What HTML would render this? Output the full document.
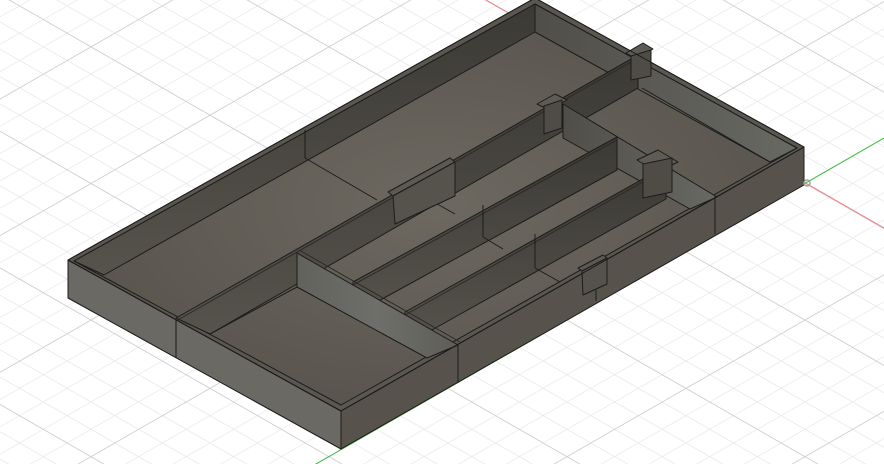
<!DOCTYPE html>
<html><head><meta charset="utf-8"><style>
html,body{margin:0;padding:0;background:#fff;width:884px;height:464px;overflow:hidden}
svg{display:block}
</style></head><body>
<svg width="884" height="464" viewBox="0 0 884 464" xmlns="http://www.w3.org/2000/svg">
<defs>
<pattern id="minor" patternUnits="userSpaceOnUse" width="1" height="1" patternTransform="matrix(23.8 13.66 -23.8 13.66 805 183)">
<path d="M0 0H1M0 0V1" stroke="#e4e4e4" stroke-width="0.05" fill="none"/>
</pattern>
<pattern id="major" patternUnits="userSpaceOnUse" width="5" height="5" patternTransform="matrix(23.8 13.66 -23.8 13.66 805 183)">
<path d="M0 0H5M0 0V5" stroke="#cfcfcf" stroke-width="0.07" fill="none"/>
</pattern>
<radialGradient id="floor" cx="0.5" cy="0.5" r="0.6">
<stop offset="0" stop-color="#6d6961"/><stop offset="1" stop-color="#56524b"/>
</radialGradient>
<linearGradient id="dark" x1="0" y1="0" x2="0" y2="1">
<stop offset="0" stop-color="#3c3a35"/><stop offset="1" stop-color="#56534c"/>
</linearGradient>
<linearGradient id="light" x1="0" y1="0" x2="1" y2="0">
<stop offset="0" stop-color="#62625d"/><stop offset="0.5" stop-color="#6e6f6a"/><stop offset="1" stop-color="#5e5d58"/>
</linearGradient>
<linearGradient id="rw" x1="0" y1="0" x2="1" y2="0">
<stop offset="0" stop-color="#504e48"/><stop offset="1" stop-color="#686963"/>
</linearGradient>
</defs>
<rect width="884" height="464" fill="#fff"/>
<rect width="884" height="464" fill="url(#minor)"/>
<rect width="884" height="464" fill="url(#major)"/>
<line x1="486" y1="0" x2="884" y2="228" stroke="#f08080" stroke-width="1"/>
<line x1="884" y1="138" x2="302" y2="472" stroke="#3cc03c" stroke-width="1"/>

<g stroke="#1c1c1a" stroke-width="1" stroke-linejoin="round">
<polygon points="68,260 341,411 341,449 68,298" fill="#6a6964"/>
<polygon points="341,411 804,147 804,185 341,449" fill="#57534c"/>
<polygon points="68,260 535,-2 804,147 341,411" fill="#5a5750"/>
<polygon points="74,261 535,4 797,148 341,405" fill="url(#floor)"/>
<polygon points="74,261 535,4 535,32 104,275" fill="url(#dark)"/>
<polygon points="535,4 797,148 770,162 535,32" fill="url(#rw)"/>
<line x1="305" y1="130" x2="305" y2="158"/>
<line x1="305" y1="158" x2="377" y2="200"/>
<polygon points="176,318 638,55 638,88 210,334" fill="url(#dark)"/>
<line x1="176" y1="321" x2="638" y2="58" stroke="#2a2a27"/>
<line x1="642" y1="88" x2="770" y2="162"/>
<polygon points="563,104 717,197 690,209 563,138" fill="url(#rw)"/>
<polygon points="353,282 617,137 617,170 353,315" fill="url(#dark)"/>
<line x1="353" y1="285" x2="617" y2="140" stroke="#2a2a27"/>
<polygon points="405,312 666,166 666,199 405,345" fill="url(#dark)"/>
<line x1="405" y1="315" x2="666" y2="169" stroke="#2a2a27"/>
<line x1="483" y1="205" x2="483" y2="237"/>
<line x1="535" y1="234" x2="535" y2="268"/>
<line x1="430" y1="200" x2="455" y2="214"/>
<line x1="483" y1="237" x2="503" y2="249"/>
<line x1="535" y1="268" x2="560" y2="282"/>
<polygon points="297,253 458,345 427,358 297,287" fill="url(#light)"/>
<line x1="299" y1="250" x2="460" y2="342" stroke="#2a2a27"/>
<line x1="210" y1="334" x2="297" y2="287"/>
<polygon points="388,192 450,158 455,162 393,196" fill="#5c5952"/>
<polygon points="393,196 455,162 455,196 395,224" fill="#56534c"/>
<polygon points="578,268 603,255 607,258 582,271" fill="#5c5952"/>
<polygon points="582,271 607,258 607,284 583,295" fill="#55524b"/>
<polygon points="537,104 555,94 567,100 549,110" fill="#5e5b54"/>
<polygon points="544,106 562,100 562,128 544,134" fill="#4f4c46"/>
<polygon points="626,53 643,43 653,49 636,59" fill="#5e5b54"/>
<polygon points="631,56 651,50 651,76 631,80" fill="#4f4c46"/>
<polygon points="637,160 658,150 678,162 657,172" fill="#5e5b54"/>
<polygon points="643,164 672,158 672,192 643,198" fill="#4f4c46"/>
<line x1="176" y1="320" x2="176" y2="358"/>
<line x1="458" y1="345" x2="458" y2="383"/>
<line x1="715" y1="196" x2="715" y2="234"/>
<line x1="596" y1="290" x2="596" y2="301"/>
<polyline points="68,260 535,-2 804,147 341,411 68,260" fill="none"/>
</g>
<circle cx="807" cy="183" r="3" fill="none" stroke="#a0a0a0" stroke-width="1.5"/>
</svg>
</body></html>
